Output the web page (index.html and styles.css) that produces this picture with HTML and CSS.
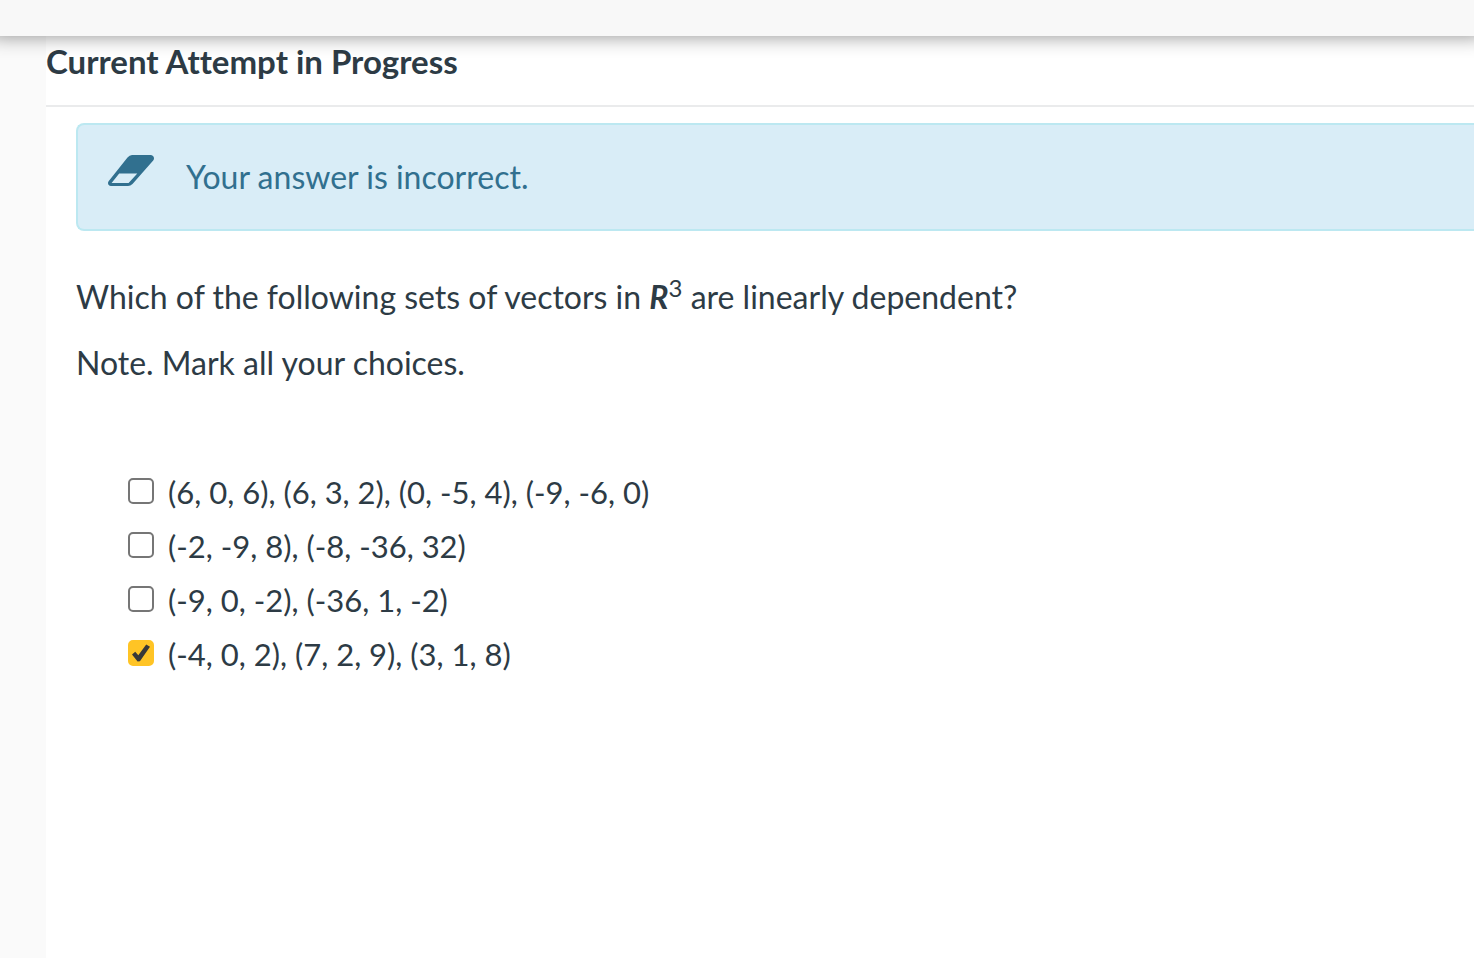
FILE: index.html
```html
<!DOCTYPE html>
<html lang="en">

<head>
    <meta charset="UTF-8">
    <meta name="viewport" content="width=device-width, initial-scale=1.0">
    <title>Current Attempt in Progress</title>
    <link rel="stylesheet" href="styles.css">
</head>

<body>
    <header class="top_bar"></header>
    <main class="question_container">
        <h1>Current Attempt in Progress</h1>

        <div class="question_body">
            <div class="alert" role="status">
                <svg class="eraser" viewBox="0 0 46 32" aria-hidden="true">
                    <path fill="currentColor" fill-rule="evenodd" d="M24 0H43Q46 0.5 46 3.5Q46 4.5 45.200 5.500L24.500 29Q22.500 31 20 31H3Q0 30.500 0 28Q0 27 0.800 26L19.500 2.500Q21.500 0 24 0ZM11.200 18.500L3.600 28H20.600L29.300 18.500Z" />
                </svg>
                <p>Your answer is incorrect.</p>
            </div>

            <p class="question">Which of the following sets of vectors in <b><i>R</i></b><sup>3</sup> are linearly dependent?</p>
            <p class="note">Note. Mark all your choices.</p>

            <form class="choices">
                <label for="choice1"><input type="checkbox" id="choice1">(6, 0, 6), (6, 3, 2), (0, -5, 4), (-9, -6, 0)</label>
                <label for="choice2"><input type="checkbox" id="choice2">(-2, -9, 8), (-8, -36, 32)</label>
                <label for="choice3"><input type="checkbox" id="choice3">(-9, 0, -2), (-36, 1, -2)</label>
                <label for="choice4"><input type="checkbox" id="choice4" checked>(-4, 0, 2), (7, 2, 9), (3, 1, 8)</label>
            </form>
        </div>
    </main>
</body>

</html>
```
FILE: styles.css
```css
* {
    margin: 0;
    padding: 0;
    box-sizing: border-box;
}

body {
    display: flex;
    flex-direction: column;
    min-height: 100vh;
    background-color: #fafafa;
    color: #2d3b45;
    font-family: Lato, sans-serif;
    font-size: 32px;
    line-height: 48px;
    font-variant-ligatures: none;
    overflow-x: hidden;
}

.top_bar {
    position: relative;
    height: 36px;
    background-color: #f8f8f8;
    box-shadow: 0 -10px 20px 10px rgba(0, 0, 0, 0.45);
}

.question_container {
    flex: 1;
    margin-left: 46px;
    background-color: white;
}

.question_container h1 {
    padding: 1px 0 20px;
    border-bottom: 2px solid #eaebec;
    font-size: 33px;
    font-weight: bold;
}

.question_body {
    padding: 16px 0 0 30px;
}

/* the box runs on past the right edge of the window */
.alert {
    display: flex;
    align-items: flex-start;
    gap: 32px;
    padding: 28px 30px;
    border: 2px solid #bce8f1;
    border-right: none;
    border-radius: 8px 0 0 8px;
    background-color: #d9edf7;
    color: #31708f;
}

.eraser {
    width: 46px;
    height: 32px;
    margin-top: 2px;
}

.question {
    margin-top: 42px;
}

.question sup {
    font-size: 24px;
    line-height: 0;
}

.note {
    margin-top: 18px;
}

.choices {
    display: flex;
    flex-direction: column;
    align-items: flex-start;
    padding: 78px 0 0 52px;
    font-size: 31px;
}

.choices label {
    display: flex;
    align-items: center;
    gap: 14px;
    line-height: 54px;
}

.choices input {
    display: grid;
    place-items: center;
    flex: none;
    width: 26px;
    height: 26px;
    margin-bottom: 2px;
    appearance: none;
    border: 2px solid #767676;
    border-radius: 5px;
    background-color: white;
}

.choices input:checked {
    border-color: #ffc425;
    background-color: #ffc425;
}

/* tick mark */
.choices input:checked::before {
    content: "";
    width: 18px;
    height: 18px;
    background-color: #383838;
    clip-path: polygon(0 58%, 18% 43%, 35% 63%, 79% 3%, 100% 15%, 44% 96%, 31% 97%);
}
```
